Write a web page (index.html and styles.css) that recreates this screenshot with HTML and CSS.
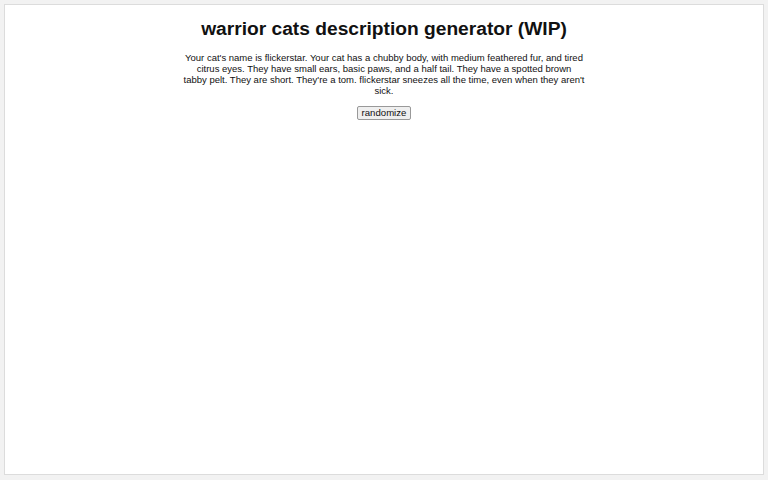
FILE: index.html
```html
<!DOCTYPE html>
<html lang="en">
<head>
  <meta charset="UTF-8" />
  <title>warrior cats description generator</title>
  <link rel="stylesheet" href="styles.css">
</head>
<body>
  <main class="sheet">
    <h1>warrior cats description generator (WIP)</h1>
    <p id="description">Your cat's name is flickerstar. Your cat has a chubby body, with medium feathered fur, and tired citrus eyes. They have small ears, basic paws, and a half tail. They have a spotted brown tabby&nbsp;pelt. They are short. They're a tom. flickerstar sneezes all the time, even when they aren't sick.</p>
    <button id="randomize">randomize</button>
  </main>
</body>
</html>
```

FILE: styles.css
```css
body {
  margin: 0;
  padding: 4px 4px 5px;
  background-color: #f2f2f2;
  font-family: 'Liberation Sans', Arial, sans-serif;
}
.sheet {
  background: white;
  border: 1px solid #dcdcdc;
  height: 471px;
  box-sizing: border-box;
  text-align: center;
  padding-top: 12px;
}
h1 {
  margin: 0;
  font-size: 19.2px;
  line-height: 24px;
  color: #111;
}
#description {
  max-width: 406px;
  margin: 11px auto 6px;
  font-size: 9.5px;
  line-height: 11px;
  color: #111;
}
button {
  font-family: 'Liberation Sans', Arial, sans-serif;
  font-size: 9.6px;
  line-height: 10px;
  padding: 1px 4px;
  background: #efefef;
  border: 1px solid #999;
  border-radius: 2px;
  color: #111;
}
```
